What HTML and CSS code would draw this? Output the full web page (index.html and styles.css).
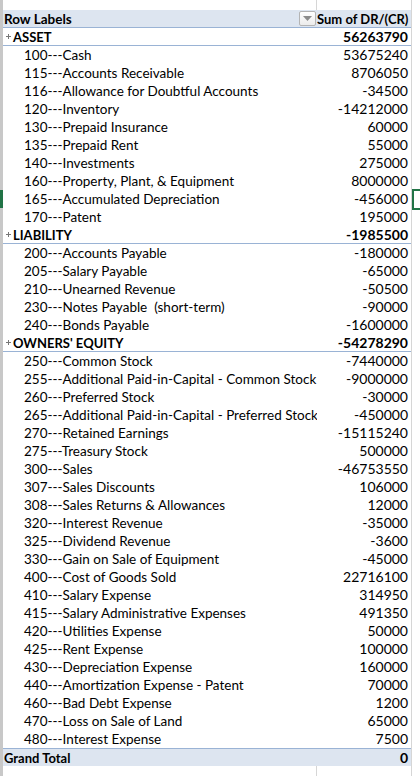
FILE: index.html
```html
<!DOCTYPE html>
<html>
<head>
<meta charset="utf-8">
<link rel="stylesheet" href="styles.css">
</head>
<body>
<div class="sheet">
  <div class="row filler"><div class="rh"></div><div class="a"></div><div class="b"></div><div class="c"></div></div>
  <div class="row hdr"><div class="rh"></div><div class="a"><span>Row Labels</span><span class="dd"><svg width="9" height="5" viewBox="0 0 9 5"><path d="M0 0H9L4.5 5Z" fill="#8c8c8c"/></svg></span></div><div class="b">Sum of DR/(CR)</div><div class="c"></div></div>

  <div class="row cat"><div class="rh"></div><div class="a"><svg class="plus" width="5" height="5" viewBox="0 0 5 5"><path d="M2.5 0V5M0 2.5H5" stroke="#777" stroke-width="1"/></svg>ASSET</div><div class="b">56263790</div><div class="c"></div></div>
  <div class="row item"><div class="rh"></div><div class="a">100---Cash</div><div class="b">53675240</div><div class="c"></div></div>
  <div class="row item"><div class="rh"></div><div class="a">115---Accounts Receivable</div><div class="b">8706050</div><div class="c"></div></div>
  <div class="row item"><div class="rh"></div><div class="a">116---Allowance for Doubtful Accounts</div><div class="b">-34500</div><div class="c"></div></div>
  <div class="row item"><div class="rh"></div><div class="a">120---Inventory</div><div class="b">-14212000</div><div class="c"></div></div>
  <div class="row item"><div class="rh"></div><div class="a">130---Prepaid Insurance</div><div class="b">60000</div><div class="c"></div></div>
  <div class="row item"><div class="rh"></div><div class="a">135---Prepaid Rent</div><div class="b">55000</div><div class="c"></div></div>
  <div class="row item"><div class="rh"></div><div class="a">140---Investments</div><div class="b">275000</div><div class="c"></div></div>
  <div class="row item"><div class="rh"></div><div class="a">160---Property, Plant, &amp; Equipment</div><div class="b">8000000</div><div class="c"></div></div>
  <div class="row item"><div class="rh sel"></div><div class="a">165---Accumulated Depreciation</div><div class="b">-456000</div><div class="c selc"></div></div>
  <div class="row item"><div class="rh"></div><div class="a">170---Patent</div><div class="b">195000</div><div class="c"></div></div>

  <div class="row cat"><div class="rh"></div><div class="a"><svg class="plus" width="5" height="5" viewBox="0 0 5 5"><path d="M2.5 0V5M0 2.5H5" stroke="#777" stroke-width="1"/></svg>LIABILITY</div><div class="b">-1985500</div><div class="c"></div></div>
  <div class="row item"><div class="rh"></div><div class="a">200---Accounts Payable</div><div class="b">-180000</div><div class="c"></div></div>
  <div class="row item"><div class="rh"></div><div class="a">205---Salary Payable</div><div class="b">-65000</div><div class="c"></div></div>
  <div class="row item"><div class="rh"></div><div class="a">210---Unearned Revenue</div><div class="b">-50500</div><div class="c"></div></div>
  <div class="row item"><div class="rh"></div><div class="a">230---Notes Payable&nbsp; (short-term)</div><div class="b">-90000</div><div class="c"></div></div>
  <div class="row item"><div class="rh"></div><div class="a">240---Bonds Payable</div><div class="b">-1600000</div><div class="c"></div></div>

  <div class="row cat"><div class="rh"></div><div class="a"><svg class="plus" width="5" height="5" viewBox="0 0 5 5"><path d="M2.5 0V5M0 2.5H5" stroke="#777" stroke-width="1"/></svg>OWNERS' EQUITY</div><div class="b">-54278290</div><div class="c"></div></div>
  <div class="row item"><div class="rh"></div><div class="a">250---Common Stock</div><div class="b">-7440000</div><div class="c"></div></div>
  <div class="row item"><div class="rh"></div><div class="a">255---Additional Paid-in-Capital - Common Stock</div><div class="b">-9000000</div><div class="c"></div></div>
  <div class="row item"><div class="rh"></div><div class="a">260---Preferred Stock</div><div class="b">-30000</div><div class="c"></div></div>
  <div class="row item"><div class="rh"></div><div class="a">265---Additional Paid-in-Capital - Preferred Stock</div><div class="b">-450000</div><div class="c"></div></div>
  <div class="row item"><div class="rh"></div><div class="a">270---Retained Earnings</div><div class="b">-15115240</div><div class="c"></div></div>
  <div class="row item"><div class="rh"></div><div class="a">275---Treasury Stock</div><div class="b">500000</div><div class="c"></div></div>
  <div class="row item"><div class="rh"></div><div class="a">300---Sales</div><div class="b">-46753550</div><div class="c"></div></div>
  <div class="row item"><div class="rh"></div><div class="a">307---Sales Discounts</div><div class="b">106000</div><div class="c"></div></div>
  <div class="row item"><div class="rh"></div><div class="a">308---Sales Returns &amp; Allowances</div><div class="b">12000</div><div class="c"></div></div>
  <div class="row item"><div class="rh"></div><div class="a">320---Interest Revenue</div><div class="b">-35000</div><div class="c"></div></div>
  <div class="row item"><div class="rh"></div><div class="a">325---Dividend Revenue</div><div class="b">-3600</div><div class="c"></div></div>
  <div class="row item"><div class="rh"></div><div class="a">330---Gain on Sale of Equipment</div><div class="b">-45000</div><div class="c"></div></div>
  <div class="row item"><div class="rh"></div><div class="a">400---Cost of Goods Sold</div><div class="b">22716100</div><div class="c"></div></div>
  <div class="row item"><div class="rh"></div><div class="a">410---Salary Expense</div><div class="b">314950</div><div class="c"></div></div>
  <div class="row item"><div class="rh"></div><div class="a">415---Salary Administrative Expenses</div><div class="b">491350</div><div class="c"></div></div>
  <div class="row item"><div class="rh"></div><div class="a">420---Utilities Expense</div><div class="b">50000</div><div class="c"></div></div>
  <div class="row item"><div class="rh"></div><div class="a">425---Rent Expense</div><div class="b">100000</div><div class="c"></div></div>
  <div class="row item"><div class="rh"></div><div class="a">430---Depreciation Expense</div><div class="b">160000</div><div class="c"></div></div>
  <div class="row item"><div class="rh"></div><div class="a">440---Amortization Expense - Patent</div><div class="b">70000</div><div class="c"></div></div>
  <div class="row item"><div class="rh"></div><div class="a">460---Bad Debt Expense</div><div class="b">1200</div><div class="c"></div></div>
  <div class="row item"><div class="rh"></div><div class="a">470---Loss on Sale of Land</div><div class="b">65000</div><div class="c"></div></div>
  <div class="row item"><div class="rh"></div><div class="a">480---Interest Expense</div><div class="b">7500</div><div class="c"></div></div>

  <div class="row total"><div class="rh"></div><div class="a">Grand Total</div><div class="b">0</div><div class="c"></div></div>
  <div class="row filler"><div class="rh"></div><div class="a"></div><div class="b"></div><div class="c"></div></div>
</div>
</body>
</html>
```

FILE: styles.css
```css
html, body {
  margin: 0;
  padding: 0;
  background: #fff;
}
body {
  font-family: Lato, "Noto Sans", sans-serif;
  font-size: 14px;
  color: #000;
}
.sheet {
  width: 420px;
  height: 776px;
  overflow: hidden;
}
.row {
  display: flex;
  height: 18px;
  line-height: 18px;
}
.rh {
  flex: none;
  width: 3px;
  background: #c8c8c8;
}
.rh.sel {
  background: #217346;
}
.a {
  flex: none;
  width: 314px;
  box-sizing: border-box;
  white-space: nowrap;
  overflow: hidden;
  padding-right: 6px;
  font-size: 13.5px;
}
.b {
  flex: none;
  width: 94px;
  box-sizing: border-box;
  text-align: right;
  padding-right: 3px;
  white-space: nowrap;
}
.c {
  flex: 1;
  border-left: 1px solid #d6d6d6;
  position: relative;
}
.selc::before {
  content: "";
  position: absolute;
  left: 0;
  top: -1px;
  bottom: -2px;
  right: -6px;
  border: 2px solid #217346;
  border-right: none;
}
.filler {
  height: 10px;
}
.filler .a {
  border-right: 1px solid #d6d6d6;
}
.hdr .a, .hdr .b {
  background: #dde5f0;
  border-bottom: 1px solid #9ab3d5;
  font-weight: 700;
}
.hdr .b {
  font-size: 13px;
}
.hdr .a {
  display: flex;
  justify-content: space-between;
  align-items: center;
  padding-left: 1px;
  padding-right: 1px;
}
.dd {
  width: 15px;
  height: 13px;
  border: 1px solid #b4b4b4;
  border-radius: 2px;
  background: linear-gradient(#ffffff, #ececec);
  display: flex;
  align-items: center;
  justify-content: center;
}
.cat .a {
  padding-left: 1px;
  font-weight: 700;
  font-size: 13px;
  display: flex;
  align-items: center;
}
.cat .a, .cat .b {
  border-bottom: 1px solid #9ab3d5;
}
.cat .b {
  font-weight: 700;
}
.plus {
  margin: 0 2px 0 2px;
}
.item .a {
  padding-left: 21px;
}
.total .a, .total .b {
  background: #dde5f0;
  border-top: 1px solid #9ab3d5;
  font-weight: 700;
}
.total .a {
  padding-left: 1px;
  font-size: 13px;
}
```
